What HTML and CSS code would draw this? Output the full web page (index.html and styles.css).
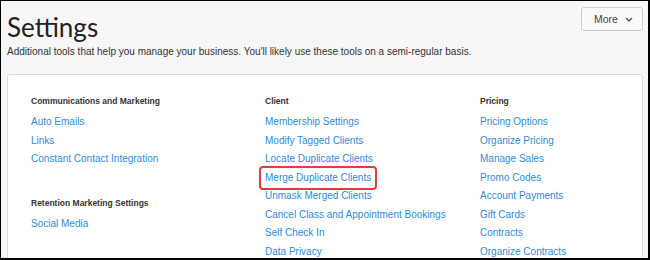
FILE: index.html
```html
<!DOCTYPE html>
<html lang="en">
<head>
    <meta charset="UTF-8">
    <meta name="viewport" content="width=device-width, initial-scale=1.0">
    <link rel="stylesheet" href="styles.css">
</head>
<body>
    <div class="page">
        <header class="page-header">
            <div>
                <h1>Settings</h1>
                <p class="subtitle">Additional tools that help you manage your business. You'll likely use these tools on a semi-regular basis.</p>
            </div>
            <button type="button" class="more-button">
                More
                <svg width="8" height="5" viewBox="0 0 8 5"><path d="M1 1l3 3 3-3" fill="none" stroke="#555" stroke-width="1.3"/></svg>
            </button>
        </header>

        <section class="card">
            <div class="column">
                <div class="group">
                    <h3>Communications and Marketing</h3>
                    <a href="#">Auto Emails</a>
                    <a href="#">Links</a>
                    <a href="#">Constant Contact Integration</a>
                </div>
                <div class="group">
                    <h3>Retention Marketing Settings</h3>
                    <a href="#">Social Media</a>
                </div>
            </div>

            <div class="column">
                <div class="group">
                    <h3>Client</h3>
                    <a href="#">Membership Settings</a>
                    <a href="#">Modify Tagged Clients</a>
                    <a href="#">Locate Duplicate Clients</a>
                    <a href="#" class="highlight">Merge Duplicate Clients</a>
                    <a href="#">Unmask Merged Clients</a>
                    <a href="#">Cancel Class and Appointment Bookings</a>
                    <a href="#">Self Check In</a>
                    <a href="#">Data Privacy</a>
                </div>
            </div>

            <div class="column">
                <div class="group">
                    <h3>Pricing</h3>
                    <a href="#">Pricing Options</a>
                    <a href="#">Organize Pricing</a>
                    <a href="#">Manage Sales</a>
                    <a href="#">Promo Codes</a>
                    <a href="#">Account Payments</a>
                    <a href="#">Gift Cards</a>
                    <a href="#">Contracts</a>
                    <a href="#">Organize Contracts</a>
                </div>
            </div>
        </section>
    </div>
</body>
</html>
```

FILE: styles.css
```css
* {
    box-sizing: border-box;
}

body {
    margin: 0;
    font-family: 'Liberation Sans', Arial, sans-serif;
    color: #333;
}

.page {
    height: 260px;
    overflow: hidden;
    background-color: #f7f7f7;
    border: 1px solid #000;
    border-right-width: 2px;
    border-bottom-width: 2px;
    padding: 0 5px 0 6px;
}

.page-header {
    display: flex;
    justify-content: space-between;
    align-items: flex-start;
}

h1 {
    font-family: 'Lato', sans-serif;
    font-weight: 400;
    font-size: 26px;
    line-height: 30px;
    margin: 11px 0 0;
    color: #222;
}

.subtitle {
    font-size: 10px;
    line-height: 14px;
    margin: 3px 0 0;
    color: #333;
}

.more-button {
    display: flex;
    align-items: center;
    gap: 7px;
    margin-top: 6px;
    width: 62px;
    height: 24px;
    padding: 0 0 0 12px;
    font-family: 'Liberation Sans', Arial, sans-serif;
    font-size: 10.5px;
    color: #444;
    background-color: #fafafa;
    border: 1px solid #ccc;
    border-radius: 3px;
}

.card {
    display: grid;
    grid-template-columns: 234px 215px 1fr;
    margin-top: 15px;
    padding: 19px 23px 20px;
    background: #fff;
    border: 1px solid #dcdcdc;
    border-radius: 3px;
    min-height: 200px;
}

.group {
    display: flex;
    flex-direction: column;
    align-items: flex-start;
}

.group + .group {
    margin-top: 27px;
}

h3 {
    font-size: 8.5px;
    font-weight: 700;
    line-height: 14px;
    margin: 0 0 5px;
    color: #333;
}

.group a {
    font-size: 10px;
    line-height: 18.5px;
    color: #2e8bd6;
    text-decoration: none;
}

.highlight {
    position: relative;
}

.highlight::after {
    content: '';
    position: absolute;
    left: -6px;
    right: -6px;
    top: -3px;
    bottom: -3px;
    border: 2px solid #e53b3f;
    border-radius: 4px;
}
```
